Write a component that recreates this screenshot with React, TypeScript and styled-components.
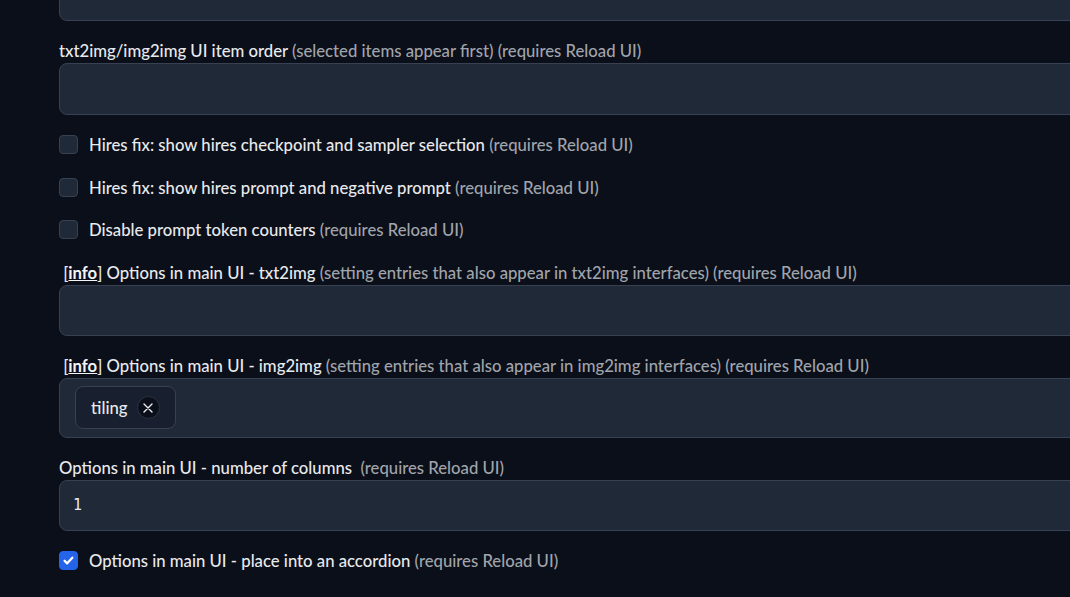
import styled, { createGlobalStyle } from "styled-components";

const Global = createGlobalStyle`
  html, body {
    margin: 0;
    padding: 0;
    background: #0b0f19;
    overflow: hidden;
  }
  body {
    font-family: Lato, "Liberation Sans", sans-serif;
    font-weight: 500;
    color: #e8eaed;
  }
`;

const Page = styled.div`
  width: 1120px;
  margin-top: -30px;
  padding-left: 59px;
  display: flex;
  flex-direction: column;
  gap: 20px;
`;

const Field = styled.div`
  display: flex;
  flex-direction: column;
  gap: 2px;
`;

const Label = styled.div`
  font-size: 16.7px;
  line-height: 20px;
  color: #e8eaed;
  white-space: pre;
`;

const Note = styled.span`
  color: #a0a4ab;
`;

const InfoLink = styled.a`
  color: #f3f4f6;
  font-weight: 700;
  text-decoration: underline;
`;

const Box = styled.div<{ h: number }>`
  height: ${(p) => p.h}px;
  box-sizing: border-box;
  background: #1f2937;
  border: 1px solid #374151;
  border-radius: 8px;
  display: flex;
  align-items: center;
  padding: 0 13px;
`;

const Chip = styled.div`
  margin-left: 2px;
  height: 43px;
  box-sizing: border-box;
  padding: 0 15px;
  display: flex;
  align-items: center;
  gap: 9px;
  background: #182030;
  border: 1px solid #374151;
  border-radius: 8px;
  font-size: 16.7px;
  color: #e8eaed;
`;

const Remove = styled.span`
  width: 23px;
  height: 23px;
  box-sizing: border-box;
  border-radius: 50%;
  background: #0b0f19;
  border: 1px solid #2b3443;
  display: flex;
  align-items: center;
  justify-content: center;
`;

const NumberText = styled.span`
  font-family: "DejaVu Sans Mono", monospace;
  font-weight: 400;
  font-size: 15px;
  color: #e8eaed;
`;

const CheckRow = styled.label`
  height: 22.5px;
  display: flex;
  align-items: flex-start;
  gap: 11px;
  font-size: 16.7px;
  line-height: 20px;
  color: #e8eaed;
`;

const Check = styled.span<{ on?: boolean }>`
  width: 19px;
  height: 19px;
  flex: none;
  box-sizing: border-box;
  border-radius: 4px;
  background: ${(p) => (p.on ? "#2563eb" : "#1f2937")};
  border: 1px solid ${(p) => (p.on ? "#2563eb" : "#374151")};
  display: flex;
  align-items: center;
  justify-content: center;
`;

function CheckItem({ text, on }: { text: string; on?: boolean }) {
  return (
    <CheckRow>
      <Check on={on}>
        {on && (
          <svg width="13" height="13" viewBox="0 0 16 16">
            <path d="M3.2 8.4l3.2 3.1 6.3-7" fill="none" stroke="#fff" strokeWidth="2.8" strokeLinecap="round" strokeLinejoin="round" />
          </svg>
        )}
      </Check>
      <span>
        {text} <Note>(requires Reload UI)</Note>
      </span>
    </CheckRow>
  );
}

export default function App() {
  return (
    <>
      <Global />
      <Page>
        <Box h={51} />
        <Field>
          <Label>
            txt2img/img2img UI item order <Note>(selected items appear first) (requires Reload UI)</Note>
          </Label>
          <Box h={52} />
        </Field>
        <CheckItem text="Hires fix: show hires checkpoint and sampler selection" />
        <CheckItem text="Hires fix: show hires prompt and negative prompt" />
        <CheckItem text="Disable prompt token counters" />
        <Field>
          <Label>
            {" "}[<InfoLink>info</InfoLink>] Options in main UI - txt2img{" "}
            <Note>(setting entries that also appear in txt2img interfaces) (requires Reload UI)</Note>
          </Label>
          <Box h={51} />
        </Field>
        <Field>
          <Label>
            {" "}[<InfoLink>info</InfoLink>] Options in main UI - img2img{" "}
            <Note>(setting entries that also appear in img2img interfaces) (requires Reload UI)</Note>
          </Label>
          <Box h={60}>
            <Chip>
              tiling
              <Remove>
                <svg width="10" height="10" viewBox="0 0 10 10">
                  <path d="M1 1l8 8M9 1l-8 8" stroke="#e8eaed" strokeWidth="1.4" strokeLinecap="round" />
                </svg>
              </Remove>
            </Chip>
          </Box>
        </Field>
        <Field>
          <Label>
            Options in main UI - number of columns  <Note>(requires Reload UI)</Note>
          </Label>
          <Box h={51}>
            <NumberText>1</NumberText>
          </Box>
        </Field>
        <CheckItem text="Options in main UI - place into an accordion" on />
      </Page>
    </>
  );
}
